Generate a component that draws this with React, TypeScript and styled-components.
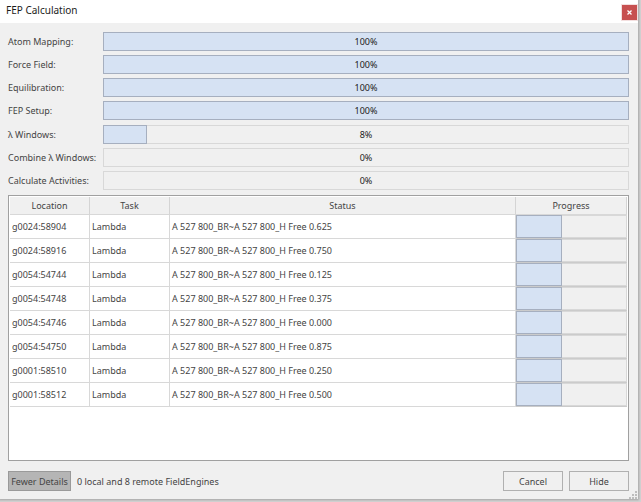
import React from 'react';
import styled, { createGlobalStyle } from 'styled-components';

const GlobalStyle = createGlobalStyle`
  * { box-sizing: border-box; }
  body {
    margin: 0;
    background: #d2d2d2;
    color: #444;
    font: 9px/15px "Noto Sans", "Open Sans", sans-serif;
  }
  button { font: inherit; color: inherit; }
`;

const Desktop = styled.div`
  display: flex;
  min-height: 100vh;
  padding: 0 3px 3px 0;
`;

const Dialog = styled.main`
  flex: 1;
  min-width: 0;
  display: flex;
  flex-direction: column;
  background: #f0f0f0;
  box-shadow: 0 0 2px 1px #a4a4a4;
`;

const TitleBar = styled.header`
  display: flex;
  align-items: center;
  justify-content: space-between;
  height: 23px;
  padding: 2px 1px 0 6px;
  background: #fff;
  color: #1c1c1c;
`;

const Title = styled.h1`
  margin: 0 0 4px;
  font-size: 10px;
  font-weight: 400;
`;

const CloseButton = styled.button`
  display: grid;
  place-items: center;
  width: 15px;
  height: 15px;
  padding: 0;
  border: 0;
  background: #c75050;
  box-shadow: 0 0 0 1px #f3dfdf;
`;

const Content = styled.div`
  flex: 1;
  display: flex;
  flex-direction: column;
  padding: 9px 9px 8px 8px;
`;

const Stages = styled.div`
  display: grid;
  grid-template-columns: 95px 1fr;
  grid-template-rows: repeat(7, 19px);
  align-content: space-between;
  align-items: center;
  height: 158px;
`;

const StageLabel = styled.span`
  white-space: nowrap;
`;

const Bar = styled.div`
  position: relative;
  height: 100%;
  border: 1px solid #d8d8d8;
  background: #f0f0f0;
`;

const BarFill = styled.div`
  position: absolute;
  inset: -1px auto -1px -1px;
  border: 1px solid #a6afbf;
  background: #d6e2f3;
`;

const BarText = styled.span`
  position: absolute;
  inset: 0;
  display: grid;
  place-items: center;
  color: #1c1c1c;
`;

const TableFrame = styled.section`
  flex: 1;
  margin-top: 5px;
  padding: 1px;
  border: 1px solid #a0a0a0;
  background: #fff;
`;

const JobTable = styled.table`
  width: 100%;
  table-layout: fixed;
  border-collapse: separate;
  border-spacing: 0;
`;

const LocationCol = styled.col`
  width: 80px;
`;

const TaskCol = styled.col`
  width: 80px;
`;

const ProgressCol = styled.col`
  width: 111px;
`;

const HeadCell = styled.th`
  height: 18px;
  padding: 0;
  border-right: 1px solid #d4d4d4;
  border-bottom: 1px solid #d8d8d8;
  background: #f0f0f0;
  font-weight: 400;
`;

const Cell = styled.td`
  height: 24px;
  padding: 0 2px;
  border-right: 1px solid #d8d8d8;
  border-bottom: 1px solid #d8d8d8;
  white-space: nowrap;
`;

const ProgressCell = styled.td`
  height: 24px;
  padding: 0;
  border-bottom: 1px solid #cbcbcb;
`;

const CellBar = styled(Bar)`
  height: 23px;
`;

const Footer = styled.footer`
  display: flex;
  align-items: center;
  gap: 6px;
  margin-top: 10px;
`;

const Button = styled.button<{ $pressed?: boolean }>`
  width: ${(p) => (p.$pressed ? 63 : 60)}px;
  height: 20px;
  padding: 0;
  border: 1px solid ${(p) => (p.$pressed ? '#9a9a9a' : '#b0b0b0')};
  background: ${(p) => (p.$pressed ? '#b5b5b5' : '#f0f0f0')};
  white-space: nowrap;
`;

const EngineSummary = styled.span`
  flex: 1;
`;

const SizeGrip = styled.svg`
  position: fixed;
  right: 4px;
  bottom: 3px;
`;

const stages = [
  { label: 'Atom Mapping:', value: 100 },
  { label: 'Force Field:', value: 100 },
  { label: 'Equilibration:', value: 100 },
  { label: 'FEP Setup:', value: 100 },
  { label: 'λ Windows:', value: 8 },
  { label: 'Combine λ Windows:', value: 0 },
  { label: 'Calculate Activities:', value: 0 },
];

const jobs = [
  { location: 'g0024:58904', lambda: '0.625' },
  { location: 'g0024:58916', lambda: '0.750' },
  { location: 'g0054:54744', lambda: '0.125' },
  { location: 'g0054:54748', lambda: '0.375' },
  { location: 'g0054:54746', lambda: '0.000' },
  { location: 'g0054:54750', lambda: '0.875' },
  { location: 'g0001:58510', lambda: '0.250' },
  { location: 'g0001:58512', lambda: '0.500' },
];

const JOB_PROGRESS = 42;

export default function App() {
  return (
    <>
      <GlobalStyle />
      <Desktop>
        <Dialog>
          <TitleBar>
            <Title>FEP Calculation</Title>
            <CloseButton type="button" aria-label="Close">
              <svg width="5" height="5" viewBox="0 0 5 5" stroke="#fff" strokeWidth="1.3">
                <path d="M.5.5l4 4M4.5.5l-4 4" />
              </svg>
            </CloseButton>
          </TitleBar>
          <Content>
            <Stages>
              {stages.map(({ label, value }, i) => (
                <React.Fragment key={label}>
                  <StageLabel id={`stage-${i}`}>{label}</StageLabel>
                  <Bar role="progressbar" aria-labelledby={`stage-${i}`} aria-valuenow={value}>
                    {value > 0 && <BarFill style={{ width: `calc(${value}% + 2px)` }} />}
                    <BarText>{value}%</BarText>
                  </Bar>
                </React.Fragment>
              ))}
            </Stages>
            <TableFrame>
              <JobTable>
                <colgroup>
                  <LocationCol />
                  <TaskCol />
                  <col />
                  <ProgressCol />
                </colgroup>
                <thead>
                  <tr>
                    <HeadCell>Location</HeadCell>
                    <HeadCell>Task</HeadCell>
                    <HeadCell>Status</HeadCell>
                    <HeadCell>Progress</HeadCell>
                  </tr>
                </thead>
                <tbody>
                  {jobs.map(({ location, lambda }) => (
                    <tr key={location}>
                      <Cell>{location}</Cell>
                      <Cell>Lambda</Cell>
                      <Cell>A 527 800_BR~A 527 800_H Free {lambda}</Cell>
                      <ProgressCell>
                        <CellBar role="progressbar" aria-label={location} aria-valuenow={JOB_PROGRESS}>
                          <BarFill style={{ width: `${JOB_PROGRESS}%` }} />
                        </CellBar>
                      </ProgressCell>
                    </tr>
                  ))}
                </tbody>
              </JobTable>
            </TableFrame>
            <Footer>
              <Button type="button" aria-pressed="true" $pressed>Fewer Details</Button>
              <EngineSummary>0 local and 8 remote FieldEngines</EngineSummary>
              <Button type="button">Cancel</Button>
              <Button type="button">Hide</Button>
            </Footer>
          </Content>
        </Dialog>
        <SizeGrip width="8" height="8" viewBox="0 0 8 8" fill="#bdbdbd" aria-hidden="true">
          <path d="M6 0h2v2H6zM3 3h2v2H3zM6 3h2v2H6zM0 6h2v2H0zM3 6h2v2H3zM6 6h2v2H6z" />
        </SizeGrip>
      </Desktop>
    </>
  );
}
